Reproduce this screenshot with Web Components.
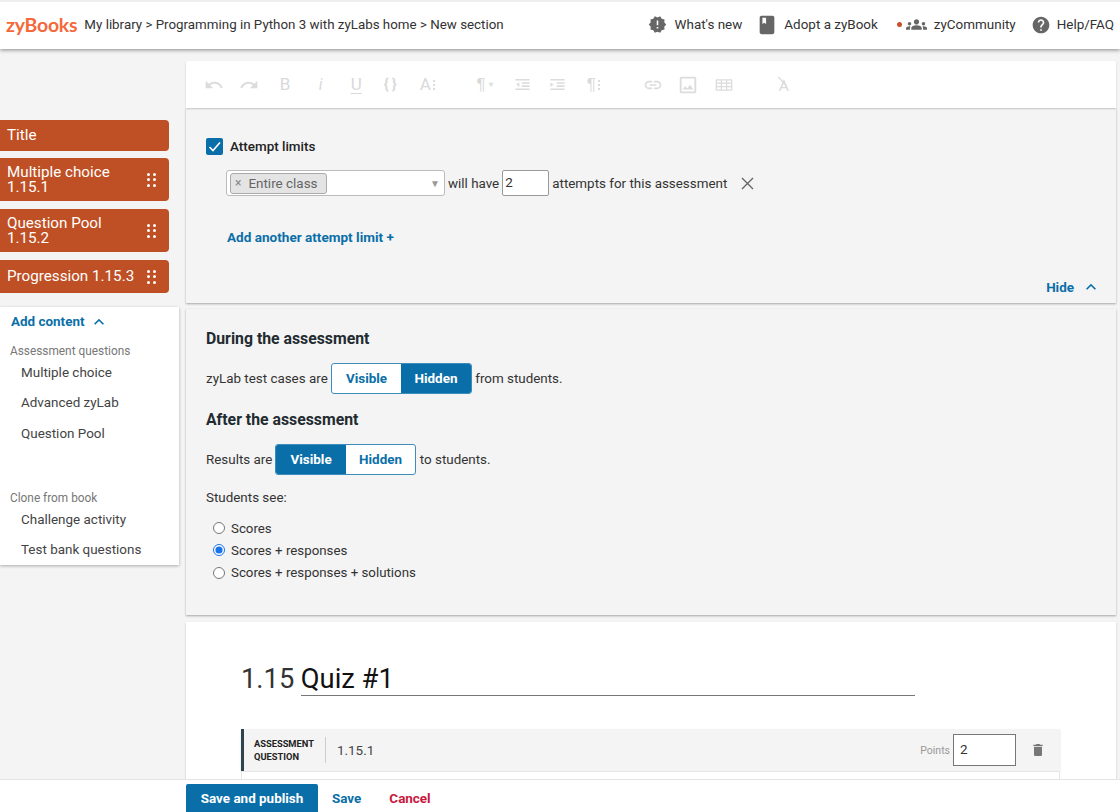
<!DOCTYPE html>
<html>
<head>
<meta charset="utf-8">
<title>zyBooks</title>
<style>
  html, body { margin: 0; height: 812px; overflow: hidden; background: #f4f4f4; }
  body { font-family: Roboto, "Liberation Sans", sans-serif; font-size: 13.45px; color: #333; position: relative; }
  .layout { display: flex; height: 763px; overflow: hidden; }
</style>
</head>
<body>
<zy-topbar></zy-topbar>
<div class="layout">
  <zy-sidebar>
    <zy-block>Title</zy-block>
    <zy-block grip>Multiple choice 1.15.1</zy-block>
    <zy-block grip style="margin-top:1px">Question Pool 1.15.2</zy-block>
    <zy-block grip style="margin-top:1px;min-height:33px">Progression 1.15.3</zy-block>
  </zy-sidebar>
  <zy-main>
    <zy-toolbar></zy-toolbar>
    <zy-attempts></zy-attempts>
    <zy-visibility></zy-visibility>
    <zy-editor></zy-editor>
  </zy-main>
</div>
<zy-footer></zy-footer>

<script>
// Material style icon paths
const ICONS = {
  undo: 'M12.5 8c-2.65 0-5.05.99-6.9 2.6L2 7v9h9l-3.62-3.62c1.39-1.16 3.16-1.88 5.12-1.88 3.54 0 6.55 2.31 7.6 5.5l2.37-.78C21.08 11.03 17.15 8 12.5 8z',
  redo: 'M18.4 10.6C16.55 8.99 14.15 8 11.5 8c-4.65 0-8.58 3.03-9.96 7.22L3.9 16c1.05-3.19 4.05-5.5 7.6-5.5 1.95 0 3.73.72 5.12 1.88L13 16h9V7l-3.6 3.6z',
  link: 'M3.9 12c0-1.71 1.39-3.1 3.1-3.1h4V7H7c-2.76 0-5 2.24-5 5s2.24 5 5 5h4v-1.9H7c-1.71 0-3.1-1.39-3.1-3.1zM8 13h8v-2H8v2zm9-6h-4v1.9h4c1.71 0 3.1 1.39 3.1 3.1s-1.39 3.1-3.1 3.1h-4V17h4c2.76 0 5-2.24 5-5s-2.24-5-5-5z',
  image: 'M19 5v14H5V5h14m0-2H5c-1.1 0-2 .9-2 2v14c0 1.1.9 2 2 2h14c1.1 0 2-.9 2-2V5c0-1.1-.9-2-2-2zm-4.86 8.86l-3 3.87L9 13.14 6 17h12l-3.86-5.14z',
  table: 'M2 5h20v14H2zM3.5 6.5v2.5h4.6V6.5zm6.1 0v2.5h4.8V6.5zm6.3 0v2.5h4.6V6.5zM3.5 10.5v2.6h4.6v-2.6zm6.1 0v2.6h4.8v-2.6zm6.3 0v2.6h4.6v-2.6zM3.5 14.6v2.9h4.6v-2.9zm6.1 0v2.9h4.8v-2.9zm6.3 0v2.9h4.6v-2.9z',
  outdent: 'M3 5h18v2H3zM11 9h10v2H11zM11 13h10v2H11zM3 17h18v2H3zM8 9v6l-4-3z',
  indent: 'M3 5h18v2H3zM11 9h10v2H11zM11 13h10v2H11zM3 17h18v2H3zM3 9v6l4-3z',
  clear: 'M12.5 5l6.5 15h-2.3l-1.3-3.2H9.6L8.3 20H6zm0 5l-2 5h4zM5 3l1.2-1 11 12.5-1.2 1z',
  del: 'M6 19c0 1.1.9 2 2 2h8c1.1 0 2-.9 2-2V7H6v12zM19 4h-3.5l-1-1h-5l-1 1H5v2h14V4z',
  help: 'M12 2C6.48 2 2 6.48 2 12s4.48 10 10 10 10-4.48 10-10S17.52 2 12 2zm1 17h-2v-2h2v2zm2.07-7.75l-.9.92C13.45 12.9 13 13.5 13 15h-2v-.5c0-1.1.45-2.1 1.17-2.83l1.24-1.26c.37-.36.59-.86.59-1.41 0-1.1-.9-2-2-2s-2 .9-2 2H8c0-2.21 1.79-4 4-4s4 1.79 4 4c0 .88-.36 1.68-.93 2.25z',
  news: 'M23 12l-2.44-2.78.34-3.68-3.61-.82-1.89-3.18L12 3 8.6 1.54 6.71 4.72l-3.61.81.34 3.68L1 12l2.44 2.78-.34 3.69 3.61.82 1.89 3.18L12 21l3.4 1.46 1.89-3.18 3.61-.82-.34-3.68L23 12zm-10 5h-2v-2h2v2zm0-4h-2V7h2v6z',
  book: 'M18 2H6c-1.1 0-2 .9-2 2v16c0 1.1.9 2 2 2h12c1.1 0 2-.9 2-2V4c0-1.1-.9-2-2-2zM7 4h4v7l-2-1.4L7 11V4z',
  people: 'M12 12.75c1.63 0 3.07.39 4.24.9 1.08.48 1.76 1.56 1.76 2.73V18H6v-1.61c0-1.18.68-2.26 1.76-2.73 1.17-.52 2.61-.91 4.24-.91zM4 13c1.1 0 2-.9 2-2s-.9-2-2-2-2 .9-2 2 .9 2 2 2zm1.13 1.1c-.37-.06-.74-.1-1.13-.1-.99 0-1.93.21-2.78.58C.48 14.9 0 15.62 0 16.43V18h4.5v-1.61c0-.83.23-1.61.63-2.29zM20 13c1.1 0 2-.9 2-2s-.9-2-2-2-2 .9-2 2 .9 2 2 2zm4 3.43c0-.81-.48-1.53-1.22-1.85-.85-.37-1.79-.58-2.78-.58-.39 0-.76.04-1.13.1.4.68.63 1.46.63 2.29V18H24v-1.57zM12 6c1.66 0 3 1.34 3 3s-1.34 3-3 3-3-1.34-3-3 1.34-3 3-3z',
  up: 'M7.41 15.41L12 10.83l4.59 4.58L18 14l-6-6-6 6z'
};

function icon(name, size, color) {
  return `<svg width="${size}" height="${size}" viewBox="0 0 24 24" fill="${color}" style="display:block;flex:none"><path d="${ICONS[name]}"/></svg>`;
}

// Small helper so each element only has to give its styles and markup
class ZyElement extends HTMLElement {
  constructor() {
    super();
    this.attachShadow({ mode: 'open' });
  }
  connectedCallback() {
    this.shadowRoot.innerHTML = `<style>${this.styles()}</style>${this.markup()}`;
  }
}

class ZyTopbar extends ZyElement {
  styles() {
    return `
      :host { display: flex; align-items: center; box-sizing: border-box; background: #fff;
        border-top: 2px solid #eee; box-shadow: 0 1px 4px rgba(0,0,0,.45); position: relative; z-index: 3;
        height: 49px; padding: 0 6px 2px; color: #333; font-size: 13.45px; }
      .logo { color: #f4683a; font: 700 19.4px Lato, Roboto, sans-serif; letter-spacing: -.2px; margin-right: 7px; }
      .crumbs { flex: 1; white-space: nowrap; font-size: 13.35px; }
      .item { display: flex; align-items: center; gap: 7px; white-space: nowrap; }
      nav { display: flex; align-items: center; }
      .dot { width: 5px; height: 5px; border-radius: 50%; background: #c8502a; margin-right: -3px; }
    `;
  }
  markup() {
    return `
      <span class="logo">zyBooks</span>
      <span class="crumbs">My library &gt; Programming in Python 3 with zyLabs home &gt; New section</span>
      <nav>
        <span class="item" style="margin-right:14px;gap:8px">${icon('news', 19, '#666')}What's new</span>
        <span class="item" style="margin-right:19px;gap:6px">${icon('book', 22, '#666')}Adopt a zyBook</span>
        <span class="item" style="margin-right:15px"><span class="dot"></span>${icon('people', 21, '#666')}zyCommunity</span>
        <span class="item" style="gap:6px">${icon('help', 20, '#666')}Help/FAQ</span>
      </nav>`;
  }
}

class ZySidebar extends ZyElement {
  styles() {
    return `
      :host { display: block; width: 186px; flex: none; box-sizing: border-box; padding-top: 71px; }
      .blocks { display: flex; flex-direction: column; gap: 7px; width: 169px; }
      .panel { width: 179px; height: 258px; margin-top: 14px; box-sizing: border-box; background: #fff; padding: 6px 0 0 0;
        box-shadow: 0 1px 3px rgba(0,0,0,.3); }
      .add { display: flex; align-items: center; gap: 4px; color: #0a6fa8; font-weight: 700; font-size: 13.45px;
        padding-left: 11px; height: 17px; }
      h4 { margin: 0; font-size: 11.85px; font-weight: 400; color: #777; padding-left: 10px; line-height: 14px; }
      .first { margin-top: 14px; }
      .second { margin-top: 36px; }
      a { display: block; color: #444; font-size: 13.45px; padding-left: 21px; height: 30.4px; line-height: 17px; }
      ul { list-style: none; margin: 6px 0 0; padding: 0; }
    `;
  }
  markup() {
    return `
      <div class="blocks"><slot></slot></div>
      <div class="panel">
        <div class="add">Add content ${icon('up', 20, '#0a6fa8')}</div>
        <h4 class="first">Assessment questions</h4>
        <ul><li><a>Multiple choice</a></li><li><a>Advanced zyLab</a></li><li><a>Question Pool</a></li></ul>
        <h4 class="second">Clone from book</h4>
        <ul style="margin-top:5.5px"><li><a>Challenge activity</a></li><li><a>Test bank questions</a></li></ul>
      </div>`;
  }
}

class ZyBlock extends ZyElement {
  styles() {
    return `
      :host { display: flex; align-items: center; background: #bf4f24; color: #fff; font-size: 15.2px; line-height: 15px;
        border-radius: 0 4px 4px 0; min-height: 31px; box-sizing: border-box; padding: 6.5px 13px 6.5px 7px; gap: 8px; }
      .text { flex: 1; }
      .grip { display: grid; grid-template-columns: 3px 3px; gap: 2.5px 3px; flex: none; }
      .grip i { width: 3px; height: 3px; border-radius: 50%; background: #fff; }
    `;
  }
  markup() {
    const grip = this.hasAttribute('grip') ? `<span class="grip">${'<i></i>'.repeat(6)}</span>` : '';
    return `<span class="text"><slot></slot></span>${grip}`;
  }
}

class ZyMain extends ZyElement {
  styles() {
    return `:host { display: flex; flex-direction: column; width: 930px; flex: none; padding-top: 12px; }`;
  }
  markup() { return `<slot></slot>`; }
}

class ZyToolbar extends ZyElement {
  styles() {
    return `
      :host { display: flex; align-items: center; height: 47px; flex: none; background: #fff; padding-left: 10px;
        border-radius: 2px 2px 0 0; color: #d9d9d9; box-shadow: 0 1px 2px rgba(0,0,0,.2); position: relative; z-index: 1; }
      span { width: 35.6px; flex: none; display: flex; justify-content: center; align-items: center; font-size: 17px; line-height: 1; }
      .sep { margin-left: 21.5px; }
      .sep2 { margin-left: 24px; }
      .curly { font-weight: 700; font-size: 15px; letter-spacing: 3px; }
      u { text-underline-offset: 3px; }
      .para { font-family: "Liberation Sans", sans-serif; font-size: 17px; }
      .caret { color: #ddd; font-size: 8px; margin-left: 3px; }
      svg.dots { margin-left: 2px; display: block; }
    `;
  }
  markup() {
    const c = '#dcdcdc';
    const dots = `<svg class="dots" width="2" height="11" viewBox="0 0 2 11" fill="${c}"><rect y="1" width="2" height="2"/><rect y="5" width="2" height="2"/><rect y="9" width="2" height="2"/></svg>`;
    return `
      <span>${icon('undo', 20, c)}</span><span>${icon('redo', 20, c)}</span>
      <span>B</span><span><i style="font-size:16px">i</i></span><span><u>U</u></span>
      <span class="curly">{}</span><span>A${dots}</span>
      <span class="sep para">¶<b class="caret">▾</b></span>
      <span style="margin-left:2px">${icon('outdent', 19, c)}</span><span>${icon('indent', 19, c)}</span><span class="para">¶${dots}</span>
      <span class="sep2">${icon('link', 20, c)}</span><span>${icon('image', 22, c)}</span><span>${icon('table', 20, c)}</span>
      <span class="sep2">${icon('clear', 19, c)}</span>`;
  }
}

class ZyAttempts extends ZyElement {
  styles() {
    return `
      :host { display: block; height: 195px; flex: none; box-sizing: border-box; padding: 29px 20px 0; position: relative;
        background: #f4f4f4; box-shadow: 0 1px 2px rgba(0,0,0,.32); color: #333; }
      .check { display: flex; align-items: center; gap: 7px; font-weight: 500; color: #222; font-size: 13.45px; height: 18px; }
      .box { width: 17px; height: 17px; border-radius: 2px; background: #0a6fa8; display: flex; align-items: center; justify-content: center; }
      .row { display: flex; align-items: center; margin: 15px 0 0 20px; height: 26px; white-space: nowrap; font-size: 13.4px; }
      .select { width: 219px; height: 26px; box-sizing: border-box; background: #fff; border: 1px solid #bbb; border-radius: 3px;
        display: flex; align-items: center; padding: 0 4px 0 3px; margin-right: 3px; }
      .chip { width: 97px; height: 21px; box-sizing: border-box; background: #e4e4e4; border: 1px solid #aaa; border-radius: 3px;
        color: #666; font-size: 13.45px; display: flex; align-items: center; gap: 7px; padding-left: 4px; }
      .chip b { font-weight: 400; font-size: 12px; color: #888; }
      .arrow { margin-left: auto; color: #999; font-size: 10px; }
      .num { width: 47px; height: 26px; box-sizing: border-box; border: 1px solid #999; border-radius: 2px; background: #fff; padding: 0 2px;
        line-height: 24px; margin: 0 3px; }
      .x { margin-left: 14px; display: block; }
      .add { display: block; margin: 33px 0 0 21px; color: #0a6fa8; font-weight: 700; font-size: 13.55px; }
      .hide { position: absolute; right: 15px; bottom: 6px; display: flex; align-items: center; gap: 7px; color: #0a6fa8; font-weight: 700; font-size: 13.45px; }
    `;
  }
  markup() {
    return `
      <label class="check"><span class="box">
        <svg width="13" height="13" viewBox="0 0 13 13" fill="none" stroke="#fff" stroke-width="1.6"><path d="M1.5 7l3.5 3.5 7-8"/></svg>
      </span>Attempt limits</label>
      <div class="row">
        <span class="select"><span class="chip"><b>×</b>Entire class</span><span class="arrow">▼</span></span>
        will have <span class="num">2</span> attempts for this assessment
        <svg class="x" width="13" height="13" viewBox="0 0 13 13" stroke="#666" stroke-width="1.4"><path d="M1 1l11 11M12 1L1 12"/></svg>
      </div>
      <a class="add">Add another attempt limit +</a>
      <a class="hide">Hide ${icon('up', 20, '#0a6fa8')}</a>`;
  }
}

class ZyToggle extends ZyElement {
  styles() {
    return `
      :host { display: inline-flex; height: 31px; box-sizing: border-box; border: 1px solid #3c8dbc; border-radius: 3px; overflow: hidden;
        background: #fff; margin: 0 3.5px 0 3px; }
      span { width: 69.5px; display: flex; align-items: center; justify-content: center; font-weight: 700; font-size: 13.45px; color: #0a6fa8; }
      .on { background: #0a6fa8; color: #fff; }
    `;
  }
  markup() {
    const on = this.getAttribute('on');
    return ['Visible', 'Hidden'].map(t => `<span class="${t === on ? 'on' : ''}">${t}</span>`).join('');
  }
}

class ZyVisibility extends ZyElement {
  styles() {
    return `
      :host { display: block; height: 306px; flex: none; margin-top: 6px; box-sizing: border-box; padding: 20px 20px 0;
        background: #f4f4f4; box-shadow: 0 1px 2px rgba(0,0,0,.32); color: #333; font-size: 13.4px; }
      h3 { margin: 0; font-size: 15.8px; line-height: 19px; font-weight: 700; color: #222b30; }
      .line { display: flex; align-items: center; height: 31px; white-space: pre; }
      .line.a { margin-top: 15px; }
      .line.b { margin-top: 14.5px; }
      h3.after { margin-top: 16px; }
      .see { margin-top: 14px; line-height: 17px; }
      .radios { margin: 14px 0 0 6.5px; display: flex; flex-direction: column; gap: 5.3px; font-size: 13.3px; }
      label { display: flex; align-items: center; gap: 6.5px; height: 17px; }
      input { margin: 0; width: 12px; height: 12px; accent-color: #1a73e8; }
    `;
  }
  markup() {
    return `
      <h3>During the assessment</h3>
      <div class="line a"><span>zyLab test cases are</span><zy-toggle on="Hidden"></zy-toggle><span>from students.</span></div>
      <h3 class="after">After the assessment</h3>
      <div class="line b"><span>Results are</span><zy-toggle on="Visible"></zy-toggle><span>to students.</span></div>
      <div class="see">Students see:</div>
      <div class="radios">
        <label><input type="radio" name="see">Scores</label>
        <label><input type="radio" name="see" checked>Scores + responses</label>
        <label><input type="radio" name="see">Scores + responses + solutions</label>
      </div>`;
  }
}

class ZyEditor extends ZyElement {
  styles() {
    return `
      :host { display: block; flex: 1; margin-top: 7px; background: #fff; padding: 41px 55px 0; box-shadow: 0 1px 2px rgba(0,0,0,.2); color: #222; }
      .title { display: flex; align-items: flex-start; width: 674px; height: 33px; font-size: 27.3px; line-height: 33px; }
      .num { margin-right: 6.6px; color: #333; }
      .name { flex: 1; border-bottom: 1px solid #777; height: 32px; color: #111; }
      .q { margin-top: 33px; height: 42px; width: 819px; box-sizing: border-box; display: flex; align-items: center; background: #f4f4f4;
        border-left: 3px solid #2d444f; box-shadow: 0 1px 2px rgba(0,0,0,.12); }
      .tag { font-size: 9.3px; line-height: 13px; font-weight: 700; color: #222; padding: 0 11px 0 10px; border-right: 1px solid #ccc; }
      .id { margin-left: 11px; font-size: 13.45px; color: #444; flex: 1; }
      .pts { font-size: 10.5px; color: #999; margin-right: 3px; }
      .val { width: 63px; height: 32px; box-sizing: border-box; border: 1px solid #777; background: #fff; font-size: 13.45px; line-height: 30px; padding-left: 6px; color: #333; }
      .trash { margin: 0 14px 0 14px; }
      .body { width: 819px; height: 30px; box-sizing: border-box; border: 1px solid #e6e6e6; background: #fff; }
    `;
  }
  markup() {
    return `
      <div class="title"><span class="num">1.15</span><span class="name">Quiz #1</span></div>
      <div class="q">
        <span class="tag">ASSESSMENT<br>QUESTION</span>
        <span class="id">1.15.1</span>
        <span class="pts">Points</span><span class="val">2</span>
        <span class="trash">${icon('del', 16, '#777')}</span>
      </div>
      <div class="body"></div>`;
  }
}

class ZyFooter extends ZyElement {
  styles() {
    return `
      :host { position: absolute; left: 0; right: 0; bottom: 0; height: 33px; box-sizing: border-box; background: #fff; z-index: 4;
        border-top: 1px solid #e4e4e4; display: flex; align-items: flex-end; padding-left: 186px; font-weight: 700; font-size: 13.45px; }
      span { display: flex; align-items: center; height: 28px; }
      .pub { width: 132px; justify-content: center; background: #0a6fa8; color: #fff; border-radius: 2px 2px 0 0; }
      .save { color: #0a6fa8; margin-left: 14px; }
      .cancel { color: #c8193f; margin-left: 28px; }
    `;
  }
  markup() {
    return `<span class="pub">Save and publish</span><span class="save">Save</span><span class="cancel">Cancel</span>`;
  }
}

customElements.define('zy-topbar', ZyTopbar);
customElements.define('zy-sidebar', ZySidebar);
customElements.define('zy-block', ZyBlock);
customElements.define('zy-main', ZyMain);
customElements.define('zy-toolbar', ZyToolbar);
customElements.define('zy-attempts', ZyAttempts);
customElements.define('zy-toggle', ZyToggle);
customElements.define('zy-visibility', ZyVisibility);
customElements.define('zy-editor', ZyEditor);
customElements.define('zy-footer', ZyFooter);
</script>
</body>
</html>
